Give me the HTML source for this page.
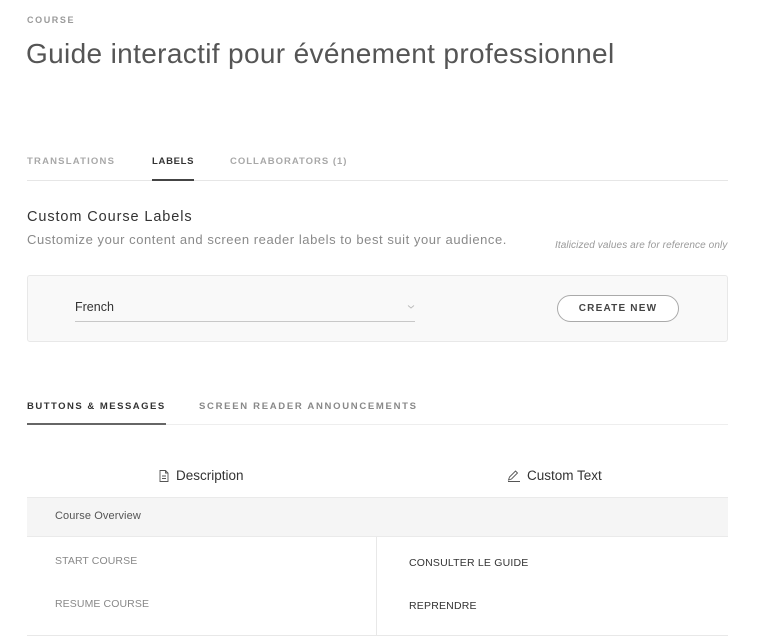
<!DOCTYPE html>
<html><head><meta charset="utf-8"><style>
*{margin:0;padding:0;box-sizing:border-box}
body{width:768px;height:638px;background:#fff;font-family:"Liberation Sans",sans-serif;position:relative;overflow:hidden;color:#333}
.a{position:absolute;white-space:nowrap}
</style></head><body>
<div class="a" style="left:27px;top:15px;font-size:9px;letter-spacing:1.6px;color:#9a9a9a;font-weight:bold">COURSE</div>
<div class="a" style="left:26px;top:38px;font-size:28px;color:#555;font-weight:300;letter-spacing:0.35px">Guide interactif pour événement professionnel</div>

<div class="a" style="left:27px;top:156px;font-size:9.5px;font-weight:bold;letter-spacing:1.2px;color:#a8a8a8">TRANSLATIONS</div>
<div class="a" style="left:152px;top:156px;font-size:9.5px;font-weight:bold;letter-spacing:0.7px;color:#333">LABELS</div>
<div class="a" style="left:230px;top:156px;font-size:9.5px;font-weight:bold;letter-spacing:1px;color:#a8a8a8">COLLABORATORS (1)</div>
<div class="a" style="left:27px;top:180px;width:701px;height:1px;background:#e6e6e6"></div>
<div class="a" style="left:152px;top:179px;width:42px;height:2px;background:#444"></div>

<div class="a" style="left:27px;top:209px;font-size:14.5px;color:#333;letter-spacing:0.9px">Custom Course Labels</div>
<div class="a" style="left:27px;top:232px;font-size:13px;color:#8a8a8a;letter-spacing:0.55px">Customize your content and screen reader labels to best suit your audience.</div>
<div class="a" style="left:555px;top:240px;font-size:10px;font-style:italic;color:#999;letter-spacing:0.1px">Italicized values are for reference only</div>

<div class="a" style="left:27px;top:275px;width:701px;height:67px;background:#f9f9f9;border:1px solid #e8e8e8;border-radius:3px"></div>
<div class="a" style="left:75px;top:300px;font-size:12.5px;color:#333">French</div>
<svg class="a" style="left:407px;top:304px" width="8" height="6" viewBox="0 0 8 6"><path d="M1 1.5 L4 4 L7 1.5" fill="none" stroke="#bbb" stroke-width="0.9"/></svg>
<div class="a" style="left:75px;top:321px;width:340px;height:1px;background:#c8c8c8"></div>
<div class="a" style="left:557px;top:295px;width:122px;height:27px;border:1px solid #aaa;border-radius:14px;background:#fff;font-size:10px;font-weight:bold;letter-spacing:1.2px;color:#444;text-align:center;line-height:25px">CREATE NEW</div>

<div class="a" style="left:27px;top:401px;font-size:9.5px;font-weight:bold;letter-spacing:1.5px;color:#333">BUTTONS &amp; MESSAGES</div>
<div class="a" style="left:199px;top:401px;font-size:9.5px;font-weight:bold;letter-spacing:1.7px;color:#888">SCREEN READER ANNOUNCEMENTS</div>
<div class="a" style="left:27px;top:424px;width:701px;height:1px;background:#eee"></div>
<div class="a" style="left:27px;top:423px;width:139px;height:2px;background:#666"></div>

<svg class="a" style="left:159px;top:470px" width="10" height="12" viewBox="0 0 10 12"><path d="M1 .5 H6.5 L9 3 V11.5 H1 Z M6.5 .5 V3 H9 M3 6 H7 M3 8.5 H7" fill="none" stroke="#555" stroke-width="0.9"/></svg>
<div class="a" style="left:176px;top:468px;font-size:13.5px;color:#333">Description</div>
<svg class="a" style="left:507px;top:470px" width="14" height="12" viewBox="0 0 14 12"><path d="M1.5 10 L2.5 7 L8.5 1 L10.5 3 L4.5 9 Z M1 11.5 H13" fill="none" stroke="#555" stroke-width="0.9"/></svg>
<div class="a" style="left:527px;top:468px;font-size:13.5px;color:#333">Custom Text</div>

<div class="a" style="left:27px;top:497px;width:701px;height:40px;background:#f5f5f5;border-top:1px solid #eaeaea;border-bottom:1px solid #eaeaea"></div>
<div class="a" style="left:55px;top:510px;font-size:11px;color:#555;letter-spacing:0.1px">Course Overview</div>
<div class="a" style="left:376px;top:537px;width:1px;height:98px;background:#e8e8e8"></div>
<div class="a" style="left:27px;top:635px;width:701px;height:1px;background:#e8e8e8"></div>
<div class="a" style="left:55px;top:555px;font-size:10.5px;color:#888;letter-spacing:0.1px">START COURSE</div>
<div class="a" style="left:409px;top:557px;font-size:10.5px;color:#333;letter-spacing:0.2px">CONSULTER LE GUIDE</div>
<div class="a" style="left:55px;top:598px;font-size:10.5px;color:#888;letter-spacing:0.1px">RESUME COURSE</div>
<div class="a" style="left:409px;top:600px;font-size:10.5px;color:#333;letter-spacing:0.2px">REPRENDRE</div>
</body></html>
